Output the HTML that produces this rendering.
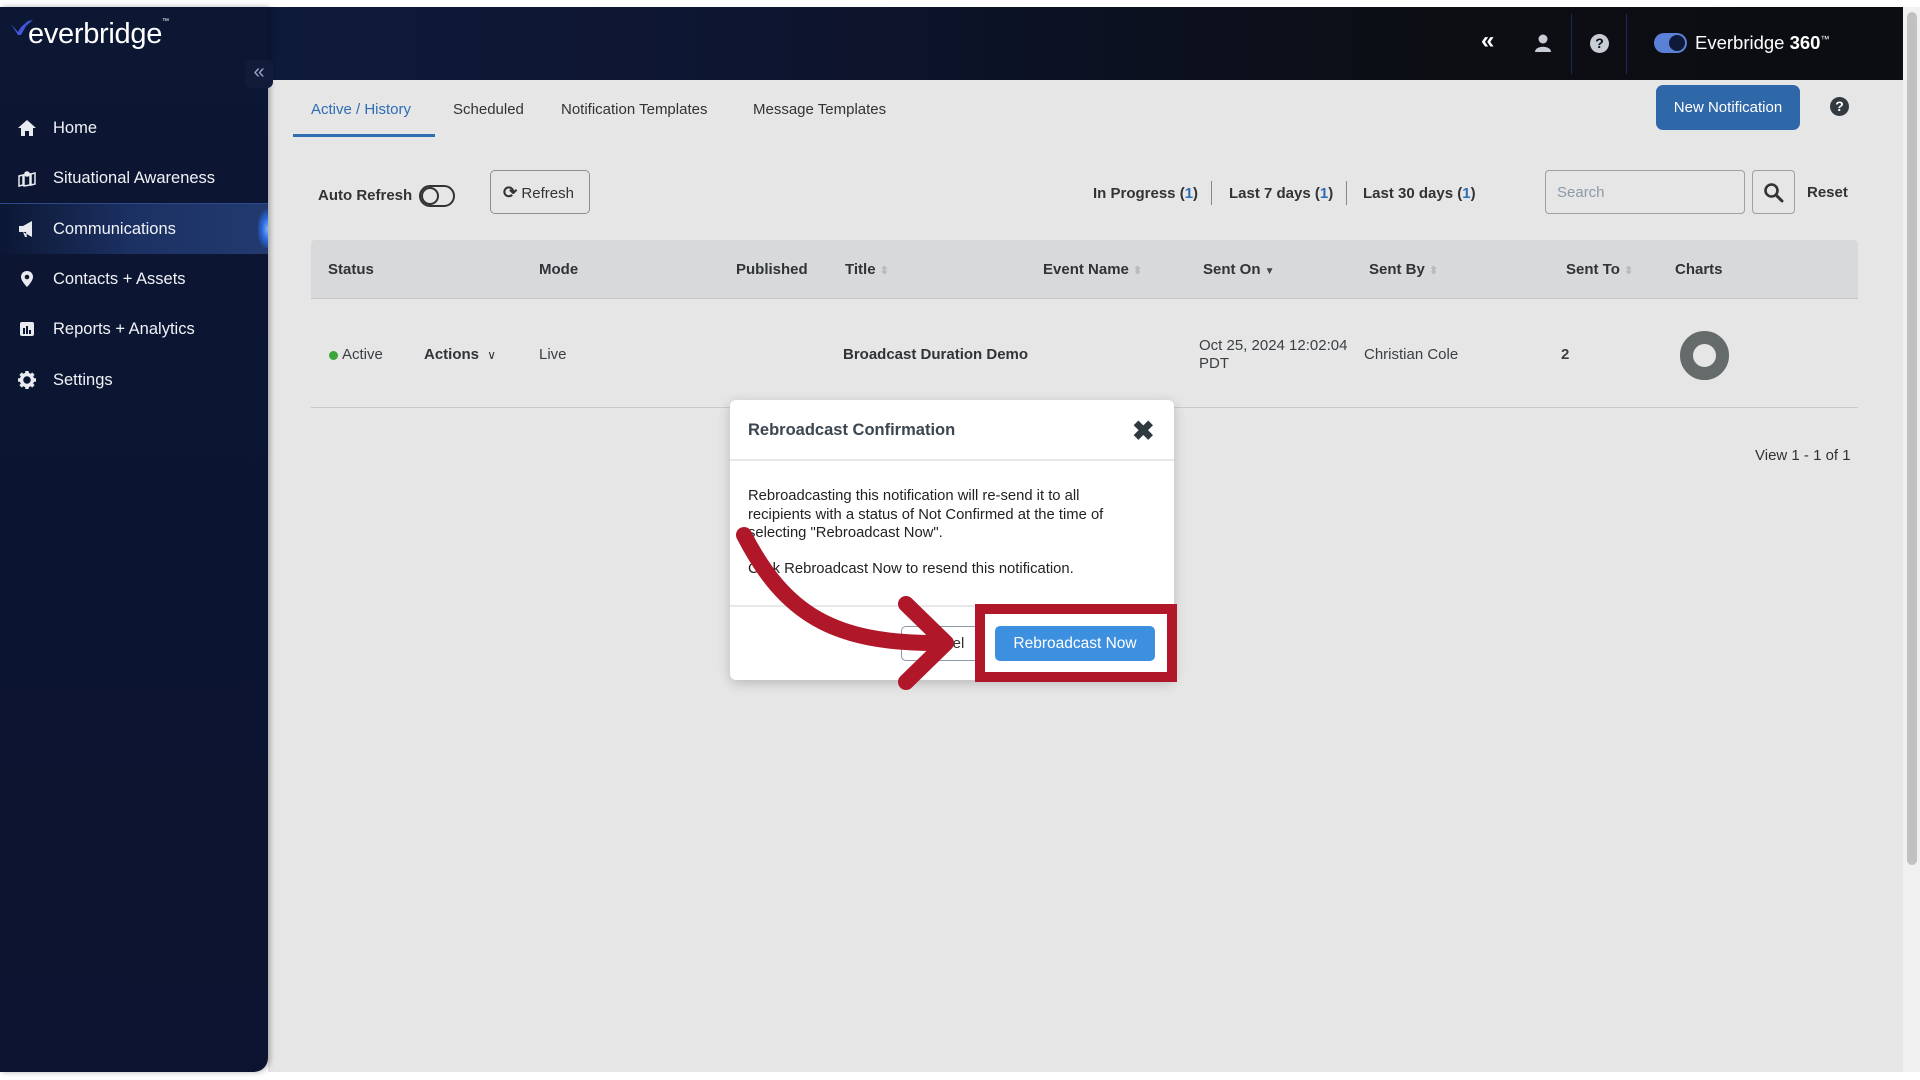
<!DOCTYPE html>
<html><head><meta charset="utf-8"><style>
*{box-sizing:border-box;margin:0;padding:0}
body{width:1920px;height:1080px;background:#fff;position:relative;overflow:hidden;font-family:"Liberation Sans",Arial,sans-serif;color:#333}
.a{position:absolute;white-space:nowrap}
#top{left:0;top:7px;width:1903px;height:73px;background:linear-gradient(90deg,#0f1c3f 0%,#0d1530 40%,#0c0e14 75%,#0c0d12 100%)}
#main{left:268px;top:80px;width:1635px;height:992px;background:#e6e6e6}
#side{left:0;top:7px;width:268px;height:1065px;background:linear-gradient(180deg,#0c1734 0%,#0b1531 50%,#0c1330 100%);border-radius:0 0 14px 0;box-shadow:2px 0 6px rgba(0,0,0,.3)}
.nav{color:#f0f2f7;font-size:16.5px;left:53px}
.ico{left:17px;width:20px;height:20px}
.th{font-size:15px;font-weight:bold;color:#2f3438;top:261px}
.td{font-size:15px;color:#3a3f44}
.tab{font-size:15px;color:#333;top:101px}
</style></head><body>
<div class="a" id="top"></div>
<div class="a" id="main"></div>
<div class="a" id="side"></div>
<div class="a" style="left:1903px;top:7px;width:17px;height:1065px;background:#f1f1f1"></div>
<div class="a" style="left:1907px;top:12px;width:10px;height:853px;background:#c1c1c1;border-radius:5px"></div>

<svg class="a" style="left:9px;top:18px" width="28" height="22" viewBox="0 0 28 22"><path d="M2 6 L9 14 L12 9 L19 3 L24 2 L17 8 L12 17 L9 17 Z" fill="#3f57d8"/></svg>
<div class="a" style="left:28px;top:18px;font-size:29px;color:#fff;letter-spacing:-0.3px">everbridge<span style="font-size:7px;vertical-align:top">™</span></div>
<div class="a" style="left:245px;top:60px;width:28px;height:28px;background:#111c3a;border-radius:6px;color:#9aa5c5;font-size:20px;text-align:center;line-height:24px">«</div>

<div class="a" style="left:0;top:203px;width:268px;height:51px;background:linear-gradient(90deg,#0c1734 0%,#1c3163 50%,#223a70 100%);border-top:1px solid #2a4a8c"></div>
<div class="a" style="left:258px;top:210px;width:10px;height:38px;background:radial-gradient(ellipse at right,#7fb8ff 0%,#2d6be0 40%,transparent 80%)"></div>
<svg class="a ico" style="top:118px" viewBox="0 0 20 20"><path d="M10 2 L19 10 L16 10 L16 18 L12 18 L12 13 L8 13 L8 18 L4 18 L4 10 L1 10 Z" fill="#e8eaf0"/></svg>
<div class="a nav" style="top:119px">Home</div>
<svg class="a ico" style="top:168px" viewBox="0 0 20 20"><path d="M2 8 L6 7 L6 17 L2 18 Z M7 7 L13 6 L13 17 L7 18 Z M14 6 L18 5 L18 16 L14 17Z" fill="none" stroke="#e8eaf0" stroke-width="1.5"/><circle cx="10" cy="6" r="2.8" fill="#e8eaf0"/></svg>
<div class="a nav" style="top:169px">Situational Awareness</div>
<svg class="a ico" style="top:219px" viewBox="0 0 20 20"><path d="M2 7 L6 7 L15 2 L15 18 L6 13 L2 13 Z M6 13 L8 18 L10 18 L9 13 Z" fill="#e8eaf0"/></svg>
<div class="a nav" style="top:220px">Communications</div>
<svg class="a ico" style="top:269px" viewBox="0 0 20 20"><path d="M10 2 C6 2 4 5 4 8 C4 12 10 18 10 18 C10 18 16 12 16 8 C16 5 14 2 10 2Z" fill="#e8eaf0"/><circle cx="10" cy="8" r="2.3" fill="#0c1734"/></svg>
<div class="a nav" style="top:270px">Contacts + Assets</div>
<svg class="a ico" style="top:319px" viewBox="0 0 20 20"><rect x="3" y="3" width="14" height="14" rx="2" fill="#e8eaf0"/><rect x="6" y="9" width="2" height="6" fill="#0c1734"/><rect x="9" y="7" width="2" height="8" fill="#0c1734"/><rect x="12" y="11" width="2" height="4" fill="#0c1734"/></svg>
<div class="a nav" style="top:320px">Reports + Analytics</div>
<svg class="a ico" style="top:370px" viewBox="0 0 20 20"><circle cx="10" cy="10" r="5.5" fill="none" stroke="#e8eaf0" stroke-width="3.5"/><g stroke="#e8eaf0" stroke-width="3.5"><path d="M10 1 V4 M10 16 V19 M1 10 H4 M16 10 H19 M3.6 3.6 L5.8 5.8 M14.2 14.2 L16.4 16.4 M3.6 16.4 L5.8 14.2 M14.2 5.8 L16.4 3.6"/></g></svg>
<div class="a nav" style="top:371px">Settings</div>

<div class="a" style="left:1481px;top:27px;color:#fff;font-size:24px;font-weight:bold">«</div>
<svg class="a" style="left:1533px;top:33px" width="20" height="20" viewBox="0 0 20 20"><circle cx="10" cy="6" r="4.5" fill="#c8ccd4"/><path d="M2 19 C2 12 18 12 18 19Z" fill="#c8ccd4"/></svg>
<div class="a" style="left:1571px;top:14px;width:1px;height:60px;background:#1b2a55"></div>
<div class="a" style="left:1590px;top:34px;width:19px;height:19px;border-radius:50%;background:#c8ccd4;color:#0c0e14;font-size:14px;font-weight:bold;text-align:center;line-height:19px">?</div>
<div class="a" style="left:1626px;top:14px;width:1px;height:60px;background:#1b2a55"></div>
<div class="a" style="left:1654px;top:33px;width:33px;height:20px;border-radius:10px;background:#5a80d8"></div>
<div class="a" style="left:1669px;top:35px;width:16px;height:16px;border-radius:50%;background:#0f1a38"></div>
<div class="a" style="left:1695px;top:32px;color:#fff;font-size:18.5px">Everbridge <b>360</b><sup style="font-size:9px">™</sup></div>

<div class="a tab" style="left:311px;color:#2e6db4">Active / History</div>
<div class="a" style="left:293px;top:134px;width:142px;height:3px;background:#2e6db4"></div>
<div class="a tab" style="left:453px">Scheduled</div>
<div class="a tab" style="left:561px">Notification Templates</div>
<div class="a tab" style="left:753px">Message Templates</div>
<div class="a" style="left:1656px;top:85px;width:144px;height:45px;background:#2f68a8;border-radius:7px;color:#fff;font-size:15px;text-align:center;line-height:45px">New Notification</div>
<div class="a" style="left:1830px;top:97px;width:19px;height:19px;border-radius:50%;background:#333a40;color:#fff;font-size:14px;font-weight:bold;text-align:center;line-height:19px">?</div>

<div class="a" style="left:318px;top:187px;font-size:15px;font-weight:bold;color:#333">Auto Refresh</div>
<div class="a" style="left:419px;top:185px;width:36px;height:22px;border:2px solid #333;border-radius:11px"></div>
<div class="a" style="left:421px;top:187px;width:18px;height:18px;border:2px solid #333;border-radius:50%;background:#e6e6e6"></div>
<div class="a" style="left:490px;top:170px;width:100px;height:44px;border:1px solid #8a9096;border-radius:5px;font-size:15px;color:#333;line-height:44px;padding-left:12px"><span style="font-weight:bold;font-size:17px">⟳</span> Refresh</div>
<div class="a" style="left:1093px;top:185px;font-size:15px;font-weight:bold;color:#333">In Progress (<span style="color:#2e6db4">1</span>)</div>
<div class="a" style="left:1211px;top:181px;width:1px;height:24px;background:#888"></div>
<div class="a" style="left:1229px;top:185px;font-size:15px;font-weight:bold;color:#333">Last 7 days (<span style="color:#2e6db4">1</span>)</div>
<div class="a" style="left:1346px;top:181px;width:1px;height:24px;background:#888"></div>
<div class="a" style="left:1363px;top:185px;font-size:15px;font-weight:bold;color:#333">Last 30 days (<span style="color:#2e6db4">1</span>)</div>
<div class="a" style="left:1545px;top:170px;width:200px;height:44px;border:1px solid #9aa0a6;border-radius:4px;font-size:15px;color:#8a9aa8;line-height:44px;padding-left:11px">Search</div>
<div class="a" style="left:1752px;top:170px;width:43px;height:44px;border:1px solid #9aa0a6;border-radius:4px"></div>
<svg class="a" style="left:1763px;top:182px" width="21" height="21" viewBox="0 0 21 21"><circle cx="8.5" cy="8.5" r="6" fill="none" stroke="#333" stroke-width="2.6"/><path d="M13 13 L19 19" stroke="#333" stroke-width="3" stroke-linecap="round"/></svg>
<div class="a" style="left:1807px;top:184px;font-size:15px;font-weight:bold;color:#333">Reset</div>

<div class="a" style="left:311px;top:240px;width:1547px;height:59px;background:#d8d9da;border-bottom:1px solid #c4c6c8;border-radius:4px 4px 0 0"></div>
<div class="a th" style="left:328px">Status</div>
<div class="a th" style="left:539px">Mode</div>
<div class="a th" style="left:736px">Published</div>
<div class="a th" style="left:845px">Title <span style="color:#bbb;font-size:11px">⬍</span></div>
<div class="a th" style="left:1043px">Event Name <span style="color:#bbb;font-size:11px">⬍</span></div>
<div class="a th" style="left:1203px">Sent On <span style="color:#444;font-size:10px">▼</span></div>
<div class="a th" style="left:1369px">Sent By <span style="color:#bbb;font-size:11px">⬍</span></div>
<div class="a th" style="left:1566px">Sent To <span style="color:#bbb;font-size:11px">⬍</span></div>
<div class="a th" style="left:1675px">Charts</div>
<div class="a" style="left:311px;top:407px;width:1547px;height:1px;background:#c8cacc"></div>
<div class="a" style="left:329px;top:351px;width:9px;height:9px;border-radius:50%;background:#3aa53a"></div>
<div class="a td" style="left:342px;top:346px">Active</div>
<div class="a td" style="left:424px;top:346px;font-weight:bold;color:#2f3438">Actions <span style="font-weight:normal;font-size:12px;margin-left:4px">∨</span></div>
<div class="a td" style="left:539px;top:346px">Live</div>
<div class="a td" style="left:843px;top:346px;font-weight:bold;color:#2f3438">Broadcast Duration Demo</div>
<div class="a td" style="left:1199px;top:337px;line-height:18px">Oct 25, 2024 12:02:04<br>PDT</div>
<div class="a td" style="left:1364px;top:346px">Christian Cole</div>
<div class="a td" style="left:1561px;top:346px;font-weight:bold">2</div>
<div class="a" style="left:1680px;top:331px;width:49px;height:49px;border-radius:50%;border:13px solid #656b6a;background:#e6e6e6"></div>
<div class="a td" style="left:1755px;top:447px;color:#333">View 1 - 1 of 1</div>

<div class="a" style="left:730px;top:400px;width:444px;height:280px;background:#fff;border-radius:6px;box-shadow:0 3px 12px rgba(0,0,0,.2)"></div>
<div class="a" style="left:730px;top:459px;width:444px;height:2px;background:#e6e9ec"></div>
<div class="a" style="left:748px;top:421px;font-size:16.5px;font-weight:bold;color:#3a4650">Rebroadcast Confirmation</div>
<div class="a" style="left:1132px;top:416px;font-size:27px;font-weight:bold;color:#2f3a40;line-height:30px">✖</div>
<div class="a" style="left:748px;top:487px;font-size:14.8px;color:#222;line-height:18.5px">Rebroadcasting this notification will re-send it to all<br>recipients with a status of Not Confirmed at the time of<br>selecting "Rebroadcast Now".</div>
<div class="a" style="left:748px;top:561px;font-size:14.8px;color:#222">Click Rebroadcast Now to resend this notification.</div>
<div class="a" style="left:730px;top:605px;width:444px;height:2px;background:#e6e9ec"></div>
<div class="a" style="left:901px;top:626px;width:80px;height:35px;border:1px solid #8a9aa8;border-radius:5px;font-size:15px;color:#333;line-height:33px;text-align:center">Cancel</div>
<div class="a" style="left:995px;top:626px;width:160px;height:35px;background:#3d8fe0;border-radius:5px;font-size:15.5px;color:#fff;line-height:35px;text-align:center">Rebroadcast Now</div>
<div class="a" style="left:975px;top:604px;width:202px;height:78px;border:10px solid #b0182a"></div>
<svg class="a" style="left:0;top:0" width="1920" height="1080"><path d="M744 535 C785 615 835 643 935 643" fill="none" stroke="#b0182a" stroke-width="16" stroke-linecap="round"/><path d="M906 604 L946 643 L906 682" fill="none" stroke="#b0182a" stroke-width="16" stroke-linecap="round" stroke-linejoin="round"/></svg>
</body></html>
